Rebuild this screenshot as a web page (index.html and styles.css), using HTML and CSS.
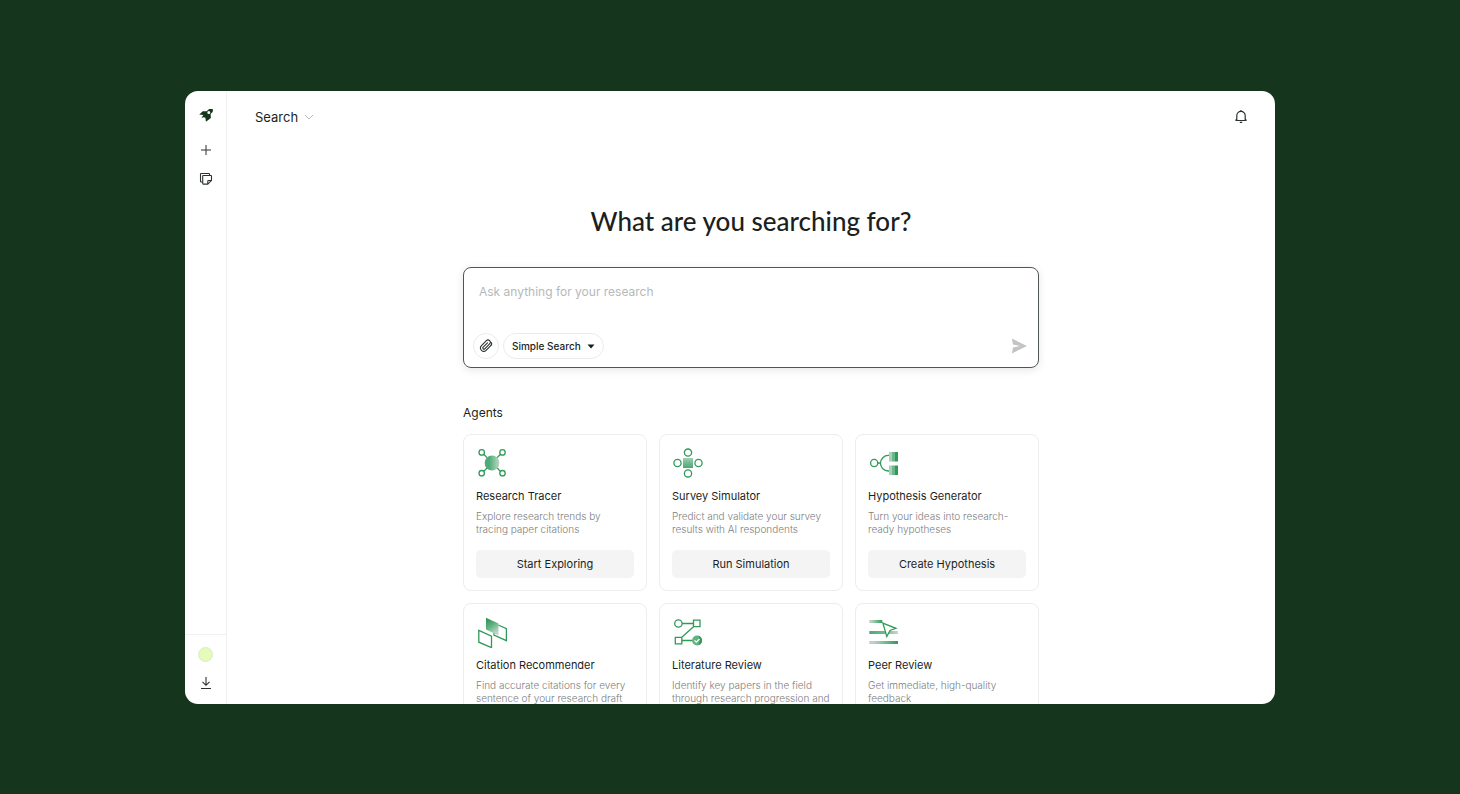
FILE: index.html
```html
<!DOCTYPE html>
<html lang="en">
<head>
    <meta charset="UTF-8">
    <meta name="viewport" content="width=device-width, initial-scale=1.0">
    <title>Search</title>
    <link rel="stylesheet" href="styles.css">
</head>
<body>
    <div class="window">
        <nav class="sidebar">
            <a href="#" class="icon-btn logo" aria-label="Home">
                <svg width="16" height="16" viewBox="0 0 16 16" fill="#16361c">
                    <path fill-rule="evenodd" d="M14.8 2h-3.600L8.600 4.200H4.800L1.200 7.400l4.100.5-1.800 3 2-.7 1.900.5.500 4 5-3.700-.3-4 2.200-2.200ZM9.300 5.600a1.500 1.500 0 1 1 3 0 1.500 1.500 0 0 1-3 0Z"/>
                </svg>
            </a>
            <button class="icon-btn" aria-label="New search">
                <svg width="16" height="16" viewBox="0 0 16 16" fill="none" stroke="#2b3330">
                    <path d="M8 3v10M3 8h10"/>
                </svg>
            </button>
            <button class="icon-btn" aria-label="Library">
                <svg width="16" height="16" viewBox="0 0 16 16" fill="none" stroke="#2b3330" stroke-width="1.1" stroke-linejoin="round">
                    <path d="M4.700 11H3.100c-.3 0-.6-.3-.6-.6V3.100c0-.3.300-.6.600-.6h7.800c.3 0 .6.300.600.600v1.300"/>
                    <path d="M5.300 4.500h7.600c.3 0 .6.300.600.600v4.300l-3.700 3.700H5.300a.6.600 0 0 1-.6-.6V5.100c0-.3.300-.6.600-.6Z"/>
                    <path d="M13.400 9.500h-3c-.3 0-.6.300-.6.600v3"/>
                </svg>
            </button>
            <div class="sidebar-footer">
                <button class="icon-btn" aria-label="Account"><span class="avatar"></span></button>
                <button class="icon-btn" aria-label="Download">
                    <svg width="16" height="16" viewBox="0 0 16 16" fill="none" stroke="#2b3330" stroke-width="1.1">
                        <path d="M8 2v8M4.5 6.8 8 10.3l3.5-3.5M3 13.5h10"/>
                    </svg>
                </button>
            </div>
        </nav>

        <main class="main">
            <header class="topbar">
                <button class="page-switch">
                    Search
                    <svg width="10" height="10" viewBox="0 0 10 10" fill="none" stroke="#b4b8b6">
                        <path d="m1 3 4 4 4-4"/>
                    </svg>
                </button>
                <button class="icon-btn" aria-label="Notifications">
                    <svg width="16" height="16" viewBox="0 0 16 16" fill="none" stroke="#2b3330" stroke-width="1.2" stroke-linejoin="round">
                        <path d="M2.500 11.500h11M3.800 11.500V6.600a4.200 4.200 0 0 1 8.400 0v4.900M2.600 11.500l1.200-1.700M13.400 11.500l-1.200-1.700"/>
                        <path d="M8 2.500V1M6.800 13.400h2.400"/>
                    </svg>
                </button>
            </header>

            <div class="content">
                <h1>What are you searching for?</h1>

                <form class="search-box">
                    <textarea aria-label="Search query" placeholder="Ask anything for your research"></textarea>
                    <div class="search-tools">
                        <button type="button" class="attach-btn" aria-label="Attach file">
                            <svg width="14" height="14" viewBox="0 0 14 14" fill="none" stroke="#2b3330" stroke-width="1.1" stroke-linecap="round">
                                <path d="m12 6.3-4.900 5a3.200 3.200 0 0 1-4.600-4.600l4.900-5a2.200 2.200 0 0 1 3.200 3.200l-4.800 4.900a1.100 1.100 0 0 1-1.600-1.600l4.300-4.300"/>
                                <path d="m11.900 3.300.1.100a2.100 2.100 0 0 1 0 2.900"/>
                            </svg>
                        </button>
                        <button type="button" class="mode-btn">
                            Simple Search
                            <svg width="8" height="5" viewBox="0 0 8 5" fill="#16201b"><path d="M.5.5h7L4 4.5Z"/></svg>
                        </button>
                        <button type="submit" class="send-btn" aria-label="Send">
                            <svg width="16" height="16" viewBox="0 0 16 16" fill="#c2c4c3">
                                <path d="M.8.6 16 8 .8 15.4 2 9.4 9.3 8 2 6.6Z"/>
                            </svg>
                        </button>
                    </div>
                </form>

                <h2>Agents</h2>
                <div class="agents">
                    <article class="card">
                        <svg class="card-icon" viewBox="0 0 32 32" fill="none" stroke="#309a58" stroke-width="1.300">
                            <defs>
                                <linearGradient id="fade-right">
                                    <stop offset=".3" stop-color="#51a878"/>
                                    <stop offset=".5" stop-color="#6db88c"/>
                                    <stop offset=".8" stop-color="#9bcdae"/>
                                    <stop offset="1" stop-color="#c9cbca"/>
                                </linearGradient>
                            </defs>
                            <path d="m7.7 7.3 3.6 3.6M24.5 7.3l-3.6 3.6M7.7 24.4l3.6-3.6M24.5 24.4l-3.6-3.6"/>
                            <circle cx="5.7" cy="5.4" r="2.7"/>
                            <circle cx="26.5" cy="5.4" r="2.7"/>
                            <circle cx="5.7" cy="26.2" r="2.7"/>
                            <circle cx="26.5" cy="26.2" r="2.7"/>
                            <circle cx="16" cy="16" r="7.4" fill="url(#fade-right)" stroke="none"/>
                        </svg>
                        <h3>Research Tracer</h3>
                        <p>Explore research trends by tracing paper citations</p>
                        <button>Start Exploring</button>
                    </article>

                    <article class="card">
                        <svg class="card-icon" viewBox="0 0 32 32" fill="none" stroke="#309a58" stroke-width="1.300">
                            <defs>
                                <linearGradient id="fade-down" x2="0" y2="1">
                                    <stop offset="0" stop-color="#a0d0b2"/>
                                    <stop offset=".5" stop-color="#73ba90"/>
                                    <stop offset="1" stop-color="#4fa776"/>
                                </linearGradient>
                            </defs>
                            <circle cx="16" cy="5.6" r="3.6"/>
                            <circle cx="5.5" cy="16" r="3.6"/>
                            <circle cx="26.5" cy="16" r="3.6"/>
                            <circle cx="16" cy="26.4" r="3.6"/>
                            <path d="M11 11h10v10H11z" fill="url(#fade-down)" stroke="none"/>
                        </svg>
                        <h3>Survey Simulator</h3>
                        <p>Predict and validate your survey results with AI respondents</p>
                        <button>Run Simulation</button>
                    </article>

                    <article class="card">
                        <svg class="card-icon" viewBox="0 0 32 32" fill="none" stroke="#309a58" stroke-width="1.300">
                            <circle cx="6.2" cy="16" r="3.6"/>
                            <path d="M9.8 16h2.9M21 8.4h-.7a7.6 7.6 0 0 0 0 15.6h.7"/>
                            <g stroke="none">
                                <path fill="#a4d3b5" d="M21 5h3v9.500h-3zM21 18.500h3V28h-3z"/>
                                <path fill="#6cb78a" d="M24 5h3v9.500h-3zM24 18.500h3V28h-3z"/>
                                <path fill="#309a58" d="M27 5h3v9.500h-3zM27 18.500h3V28h-3z"/>
                            </g>
                        </svg>
                        <h3>Hypothesis Generator</h3>
                        <p>Turn your ideas into research-ready hypotheses</p>
                        <button>Create Hypothesis</button>
                    </article>

                    <article class="card">
                        <svg class="card-icon" viewBox="0 0 32 32" fill="none" stroke="#309a58" stroke-width="1.300">
                            <defs>
                                <linearGradient id="fade-corner" x1=".1" y1="0" x2=".6" y2="1">
                                    <stop offset=".1" stop-color="#309a58"/>
                                    <stop offset=".5" stop-color="#63b284"/>
                                    <stop offset=".8" stop-color="#9bcdae"/>
                                    <stop offset="1" stop-color="#cfcfcf"/>
                                </linearGradient>
                            </defs>
                            <path d="m22.300 9 8.100 3.700v12L18 19V15"/>
                            <path d="m2.800 14.300 12.700 5.900v11.400L2.800 26.200Z"/>
                            <path d="m10 1.700 12.500 5.800v12L10 13.500Z" fill="url(#fade-corner)" stroke="none"/>
                        </svg>
                        <h3>Citation Recommender</h3>
                        <p>Find accurate citations for every sentence of your research draft</p>
                    </article>

                    <article class="card">
                        <svg class="card-icon" viewBox="0 0 32 32" fill="none" stroke="#309a58" stroke-width="1.300">
                            <circle cx="6.4" cy="7.500" r="3.700"/>
                            <path d="M10 7.500h11.500M21.500 4.200h6.500v6.500h-6.500zM21.500 10.700 9.800 21.300M3.300 21.300h6.500v6.500H3.300zM9.800 24.500H21"/>
                            <circle cx="25" cy="24.500" r="4.900" fill="#63b284" stroke="none"/>
                            <path fill="#309a58" stroke="none" d="M26.500 19.800a4.900 4.900 0 0 1 0 9.400l1.300-4.700Z"/>
                            <path stroke="#fff" d="m22.500 24.400 1.800 1.800 3.200-3.200"/>
                        </svg>
                        <h3>Literature Review</h3>
                        <p>Identify key papers in the field through research progression and</p>
                    </article>

                    <article class="card">
                        <svg class="card-icon" viewBox="0 0 32 32" fill="none" stroke="#309a58" stroke-width="1.300">
                            <defs>
                                <linearGradient id="bar-up">
                                    <stop offset="0" stop-color="#c9cbca"/>
                                    <stop offset=".15" stop-color="#c0cfc5"/>
                                    <stop offset=".4" stop-color="#8cc6a2"/>
                                    <stop offset="1" stop-color="#309a58"/>
                                </linearGradient>
                                <linearGradient id="bar-down">
                                    <stop offset="0" stop-color="#51a878"/>
                                    <stop offset=".5" stop-color="#6db88c"/>
                                    <stop offset="1" stop-color="#d3d3d3"/>
                                </linearGradient>
                            </defs>
                            <g stroke="none">
                                <path fill="url(#bar-up)" d="M1.300 4h13v3h-13z"/>
                                <path fill="url(#bar-down)" d="M1.300 15H30v3H1.300z"/>
                                <path fill="url(#bar-up)" d="M1.300 25H30v3H1.300z"/>
                            </g>
                            <path fill="#fff" d="m14.900 7.100 13 5.200-5.900 2.200-3.200 6.100Z"/>
                        </svg>
                        <h3>Peer Review</h3>
                        <p>Get immediate, high-quality feedback</p>
                    </article>
                </div>
            </div>
        </main>
    </div>
</body>
</html>
```

FILE: styles.css
```css
* {
    box-sizing: border-box;
}

body {
    margin: 0;
    height: 100vh;
    padding: 91px 185px 90px;
    display: flex;
    background-color: #15361c;
    font-family: Inter, "Liberation Sans", sans-serif;
    color: #1b1f1d;
}

h1, h2, h3, p {
    margin: 0;
}

button, textarea {
    font-family: inherit;
    color: inherit;
    border: none;
    background: none;
    padding: 0;
    margin: 0;
}

button {
    cursor: pointer;
}

svg {
    display: block;
}

.window {
    flex: 1;
    display: flex;
    background-color: #fff;
    border-radius: 13px;
    overflow: hidden;
}

/* Sidebar */
.sidebar {
    width: 42px;
    flex-shrink: 0;
    display: flex;
    flex-direction: column;
    align-items: center;
    gap: 13px;
    padding-top: 16px;
    border-right: 1px solid #f1f1f1;
}

.icon-btn {
    display: flex;
    width: 16px;
    height: 16px;
    align-items: center;
    justify-content: center;
}

.logo {
    margin-bottom: 6px;
}

.sidebar-footer {
    margin-top: auto;
    align-self: stretch;
    display: flex;
    flex-direction: column;
    align-items: center;
    gap: 13px;
    padding: 11px 0 13px;
    border-top: 1px solid #f1f1f1;
}

.avatar {
    width: 15px;
    height: 15px;
    border: 1px solid #dfe8d0;
    border-radius: 50%;
    background-color: #e5fbb8;
}

/* Main */
.main {
    flex: 1;
    min-width: 0;
    overflow: hidden;
}

.topbar {
    height: 52px;
    display: flex;
    align-items: center;
    justify-content: space-between;
    padding: 0 26px 0 28px;
}

.page-switch {
    display: flex;
    align-items: center;
    gap: 6px;
    font-size: 13px;
    font-weight: 400;
}

.content {
    max-width: 576px;
    margin: 60px auto 0;
}

h1 {
    font-family: Lato, sans-serif;
    font-size: 26px;
    font-weight: 500;
    line-height: 36px;
    text-align: center;
}

.search-box {
    margin-top: 28px;
    border: 1px solid #4f5653;
    border-radius: 8px;
    box-shadow: 0 2px 8px rgba(0, 0, 0, 0.1);
}

.search-box textarea {
    display: block;
    width: 100%;
    height: 65px;
    padding: 16px 15px;
    font-size: 12px;
    line-height: 16px;
    resize: none;
    outline: none;
}

.search-box textarea::placeholder {
    color: #b7b9b8;
}

.search-tools {
    display: flex;
    align-items: center;
    gap: 4px;
    padding: 0 11px 8px 9px;
}

.attach-btn, .mode-btn {
    display: flex;
    align-items: center;
    justify-content: center;
    height: 26px;
    border: 1px solid #ebebeb;
    border-radius: 13px;
}

.attach-btn {
    width: 26px;
}

.mode-btn {
    gap: 6px;
    padding: 0 8px;
    font-size: 10px;
    font-weight: 500;
}

.send-btn {
    margin-left: auto;
}

/* Agents */
h2 {
    margin: 36px 0 12px;
    font-size: 12px;
    font-weight: 400;
    line-height: 18px;
}

.agents {
    display: grid;
    grid-template-columns: repeat(3, 1fr);
    grid-auto-rows: minmax(157px, auto);
    gap: 12px;
}

.card {
    padding: 12px;
    border: 1px solid #ededed;
    border-radius: 8px;
}

.card-icon {
    width: 32px;
    height: 32px;
    margin-bottom: 9px;
}

.card h3 {
    font-size: 11px;
    font-weight: 400;
    line-height: 16px;
}

.card p {
    margin: 6px 0 14px;
    font-size: 10px;
    font-weight: 300;
    line-height: 13px;
    color: #7d807e;
}

.card button {
    display: block;
    width: 100%;
    height: 28px;
    border-radius: 5px;
    background-color: #f4f4f4;
    font-size: 11px;
    font-weight: 400;
}
```
